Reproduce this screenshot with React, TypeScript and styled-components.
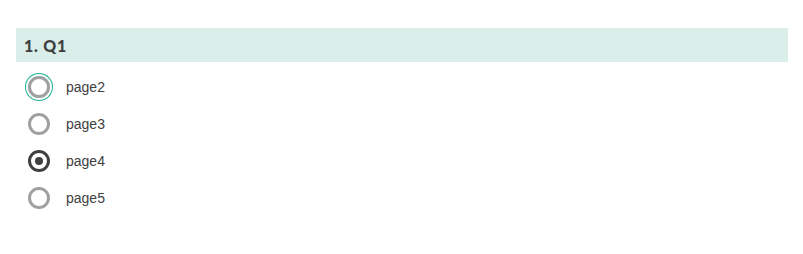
import React, { useState } from 'react'
import styled, { createGlobalStyle } from 'styled-components';

const GlobalStyle = createGlobalStyle`
  html, body {
    margin: 0;
    padding: 0;
    background: #fff;
  }
  body {
    font-family: "Liberation Sans", Arial, sans-serif;
    color: #404040;
  }
`;

const Page = styled.div`
  padding: 28px 15px 0 16px;
`;

const Question = styled.div`
  display: flex;
  flex-direction: column;
`;

const Header = styled.div`
  height: 34px;
  display: flex;
  align-items: center;
  padding-left: 8px;
  background: #d9eee8;
  h5 {
    margin: 0;
    font-family: Lato, "Open Sans", sans-serif;
    font-weight: 900;
    font-size: 16px;
    color: #404040;
    letter-spacing: 0.8px;
  }
`;

const Choices = styled.div`
  display: flex;
  flex-direction: column;
  margin-top: 6px;
  padding-left: 12px;
`;

const Choice = styled.label`
  height: 37px;
  display: flex;
  align-items: center;
  gap: 16px;
  cursor: pointer;
  font-size: 14px;
  color: #404040;
`;

const Circle = styled.span<{ $checked: boolean; $focused: boolean }>`
  box-sizing: border-box;
  width: 22px;
  height: 22px;
  border-radius: 50%;
  border: 3px solid ${p => (p.$checked ? '#404040' : '#a0a0a0')};
  display: flex;
  align-items: center;
  justify-content: center;
  box-shadow: ${p => (p.$focused ? '0 0 0 2px #fff, 0 0 0 3px #19b394' : 'none')};
  &::after {
    content: '';
    width: 8px;
    height: 8px;
    border-radius: 50%;
    background: #404040;
    display: ${p => (p.$checked ? 'block' : 'none')};
  }
`;

const choices = ['page2', 'page3', 'page4', 'page5'];

export default function App() {
  const [value, setValue] = useState('page4');
  const [focused, setFocused] = useState('page2');

  return (
    <>
      <GlobalStyle />
      <Page>
        <Question>
          <Header>
            <h5>1. Q1</h5>
          </Header>
          <Choices>
            {choices.map(c => (
              <Choice
                key={c}
                onClick={() => {
                  setValue(c);
                  setFocused(c);
                }}
              >
                <Circle $checked={value === c} $focused={focused === c} />
                <span>{c}</span>
              </Choice>
            ))}
          </Choices>
        </Question>
      </Page>
    </>
  );
}
